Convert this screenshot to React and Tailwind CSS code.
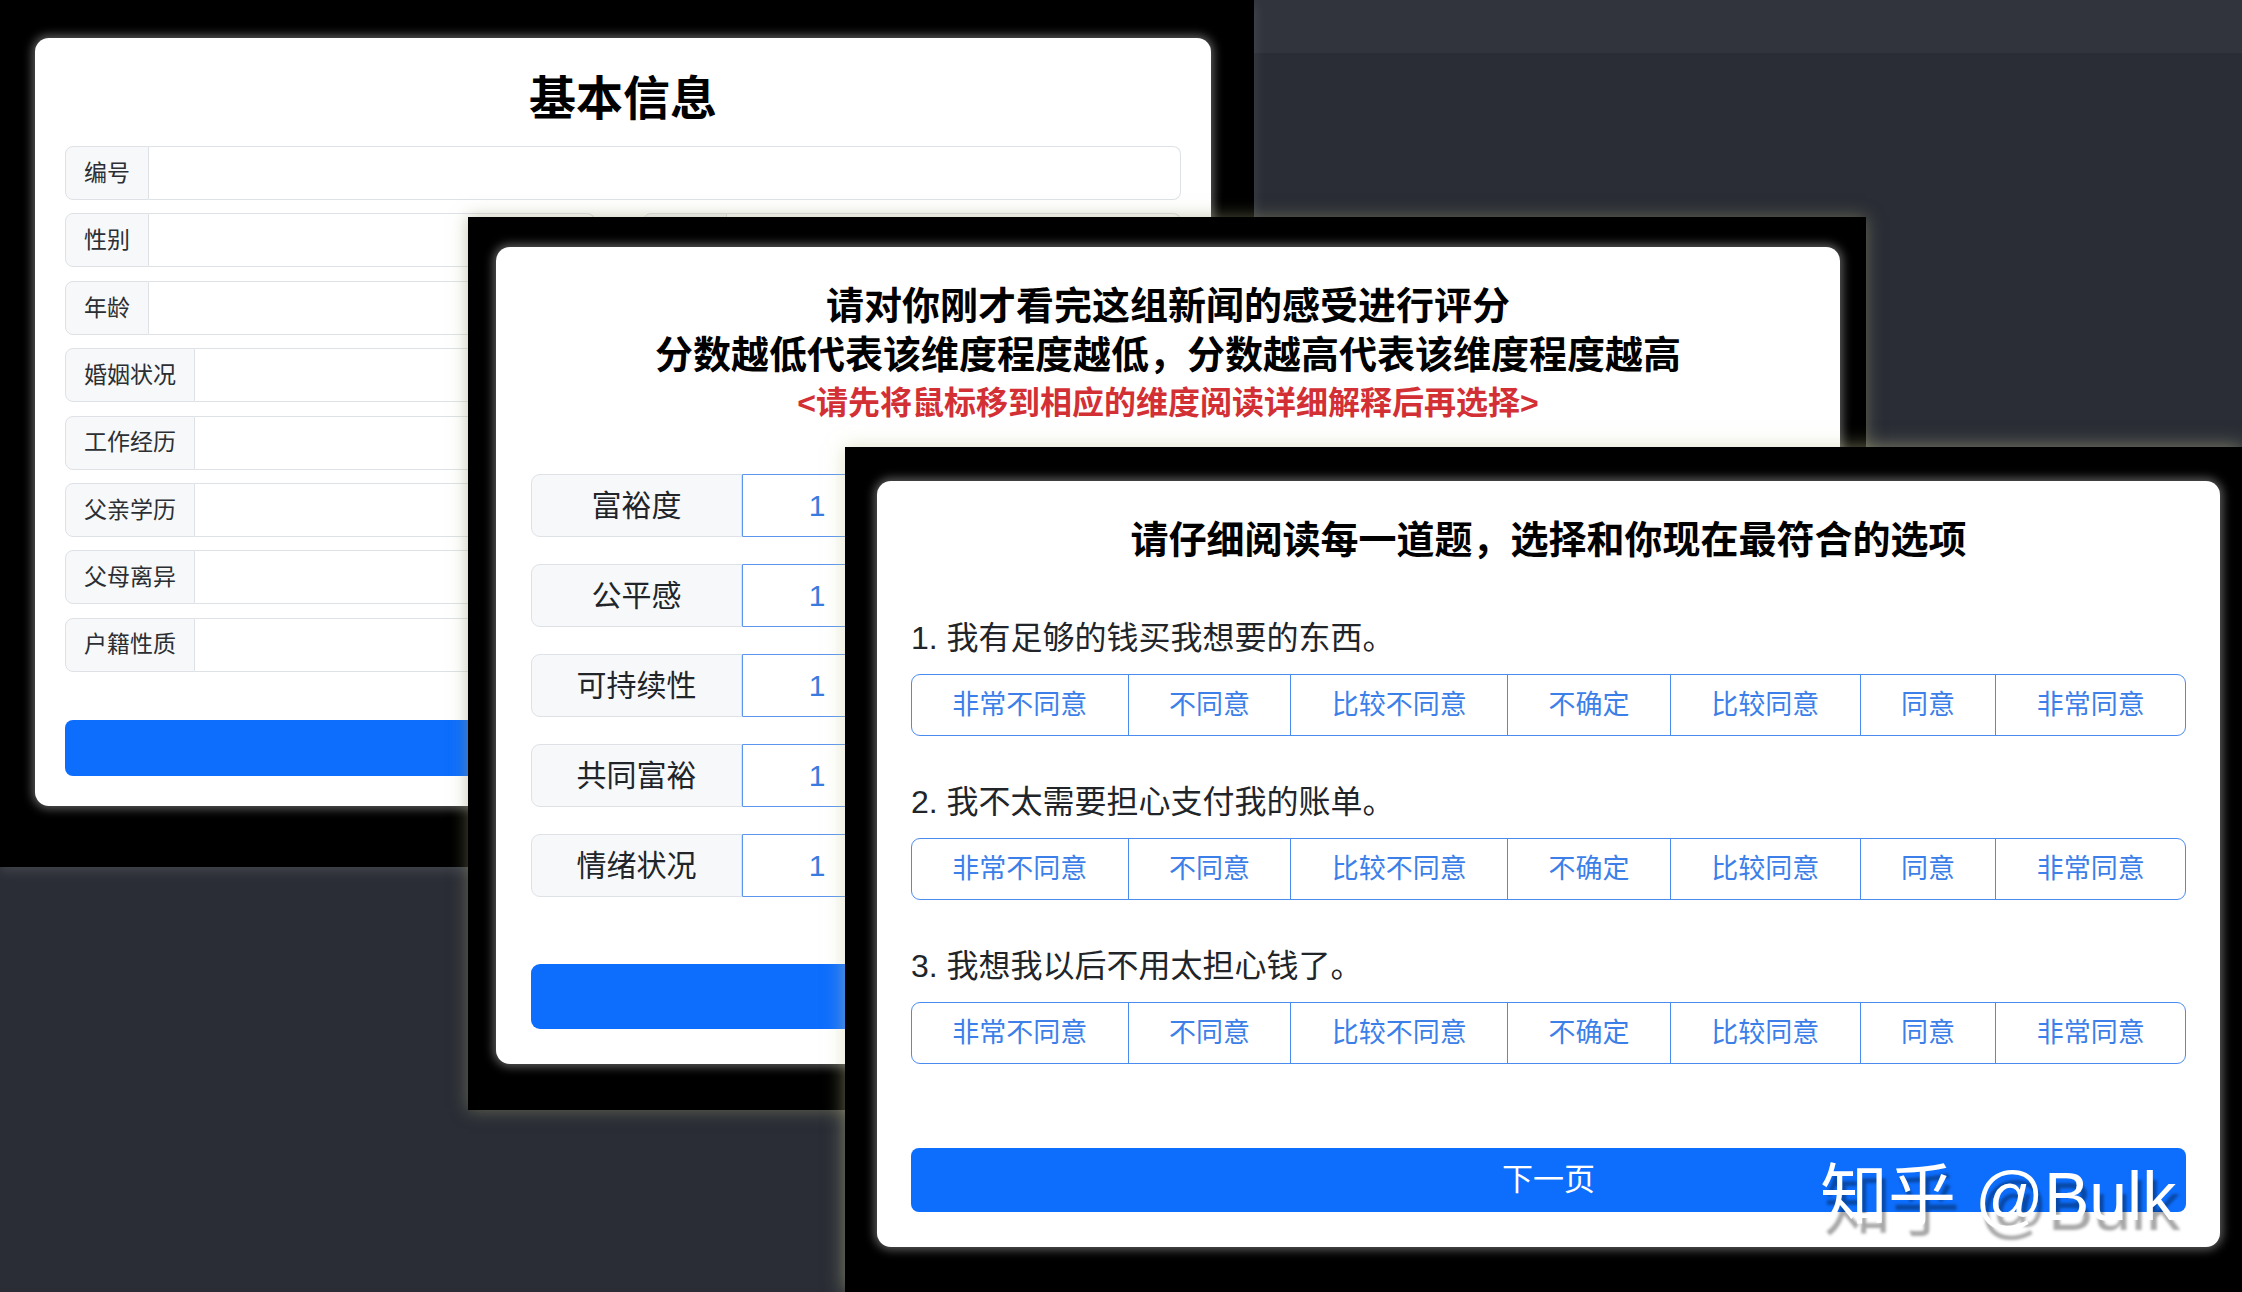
import React from 'react';

const infoRows = ['编号', '性别', '年龄', '婚姻状况', '工作经历', '父亲学历', '父母离异', '户籍性质'];
const dims = ['富裕度', '公平感', '可持续性', '共同富裕', '情绪状况'];
const questions = [
  '1. 我有足够的钱买我想要的东西。',
  '2. 我不太需要担心支付我的账单。',
  '3. 我想我以后不用太担心钱了。',
];
const options = ['非常不同意', '不同意', '比较不同意', '不确定', '比较同意', '同意', '非常同意'];

const InfoGroup = ({ label, className = '' }) => (
  <div className={`flex h-[54px] ${className}`}>
    <span className="flex items-center px-[18px] bg-[#f7f8f9] border border-[#dee2e6] rounded-l-[8px] text-[23px] text-[#2b2f33]">
      {label}
    </span>
    <div className="flex-1 bg-white border border-l-0 border-[#dee2e6] rounded-r-[8px]" />
  </div>
);

const BasicInfo = () => (
  <div className="absolute left-0 top-0 w-[1254px] h-[867px] bg-black pl-[35px] pt-[38px] shadow-[0_4px_12px_rgba(255,255,255,0.12)]">
    <div className="w-[1176px] h-[768px] bg-white rounded-[14px] px-[30px] pt-[33px] shadow-[0_0_10px_3px_rgba(255,255,255,0.35)]">
      <h1 className="h-[56px] leading-[56px] text-center text-[47px] font-bold text-black">基本信息</h1>
      <div className="mt-[19px] flex flex-col gap-[13.4px]">
        {infoRows.map((label) =>
          label === '性别' ? (
            <div key={label} className="flex gap-[48px]">
              <InfoGroup label={label} className="w-[530px]" />
              <InfoGroup label="民族" className="flex-1" />
            </div>
          ) : (
            <InfoGroup key={label} label={label} />
          )
        )}
      </div>
      <button className="mt-[48px] w-full h-[56px] bg-[#0d6efd] rounded-[8px] text-white text-[24px]">提交</button>
    </div>
  </div>
);

const Rating = () => (
  <div className="absolute left-[468px] top-[217px] w-[1398px] h-[893px] bg-black pl-[28px] pt-[30px] shadow-[0_0_16px_rgba(150,150,110,0.55)]">
    <div className="w-[1344px] h-[817px] bg-white rounded-[14px] px-[35px] pt-[35px] shadow-[0_0_10px_3px_rgba(255,255,255,0.35)]">
      <div className="text-center font-bold text-[38px] leading-[49px] text-black">
        <p>请对你刚才看完这组新闻的感受进行评分</p>
        <p>分数越低代表该维度程度越低，分数越高代表该维度程度越高</p>
      </div>
      <p className="text-center font-bold text-[32px] leading-[46px] text-[#d33035]">
        &lt;请先将鼠标移到相应的维度阅读详细解释后再选择&gt;
      </p>
      <div className="mt-[48px] flex flex-col gap-[27px]">
        {dims.map((d) => (
          <div key={d} className="flex h-[63px]">
            <span className="w-[211px] flex items-center justify-center bg-[#f7f8f9] border border-[#dee2e6] rounded-l-[9px] text-[30px] text-[#212529]">
              {d}
            </span>
            <div className="w-[150px] flex items-center justify-center border-[1.5px] border-[#5b95ee] rounded-r-[9px] text-[30px] text-[#3a7be0]">
              1
            </div>
          </div>
        ))}
      </div>
      <button className="mt-[67px] w-full h-[65px] bg-[#0d6efd] rounded-[9px] text-white text-[30px]">下一页</button>
    </div>
  </div>
);

const Questions = () => (
  <div className="absolute left-[845px] top-[447px] w-[1397px] h-[845px] bg-black pl-[32px] pt-[34px] shadow-[0_0_18px_rgba(200,200,150,0.55)]">
    <div className="w-[1343px] h-[766px] bg-white rounded-[14px] px-[34px] pt-[34px] shadow-[0_0_10px_3px_rgba(255,255,255,0.35)]">
      <h2 className="text-center font-bold text-[38px] leading-[50px] text-black">
        请仔细阅读每一道题，选择和你现在最符合的选项
      </h2>
      <div className="mt-[50px] flex flex-col gap-[43px]">
        {questions.map((q) => (
          <div key={q}>
            <p className="text-[32px] leading-[46px] text-[#212529]">{q}</p>
            <div className="mt-[13px] flex h-[62px] border-[1.5px] border-[#4a8bf0] rounded-[9px] overflow-hidden">
              {options.map((o, i) => (
                <div
                  key={o}
                  className={`flex-auto flex items-center justify-center px-[40px] text-[27px] text-[#3d7fe8] ${i > 0 ? 'border-l-[1.5px] border-[#4a8bf0]' : ''}`}
                >
                  {o}
                </div>
              ))}
            </div>
          </div>
        ))}
      </div>
      <button className="mt-[84px] w-full h-[64px] bg-[#0d6efd] rounded-[8px] text-white text-[31px]">下一页</button>
    </div>
  </div>
);

export default function App() {
  return (
    <div className="relative w-[2242px] h-[1292px] overflow-hidden bg-[linear-gradient(to_bottom,#31343d_0,#31343d_53px,#2a2d35_53px)] font-['Liberation_Sans','Noto_Sans_CJK_SC',sans-serif]">
      <BasicInfo />
      <Rating />
      <Questions />
      {/* watermark */}
      <div className="absolute left-[1820px] top-[1162px] text-[68px] leading-none text-white [text-shadow:4px_10px_3px_rgba(0,0,0,0.35)] whitespace-nowrap">
        知乎 @Bulk
      </div>
    </div>
  );
}
